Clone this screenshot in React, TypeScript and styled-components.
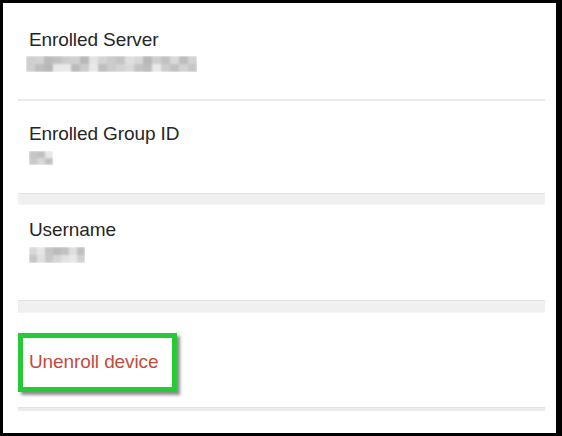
import React from "react";
import styled, { createGlobalStyle } from "styled-components";

const Global = createGlobalStyle`
  html, body { margin: 0; padding: 0; background: #000; }
  body { font-family: "Liberation Sans", Arial, sans-serif; }
`;

const Frame = styled.div`
  width: 562px;
  height: 436px;
  box-sizing: border-box;
  background: #000;
  padding: 3px 6px 3px 3px;
`;

const Screen = styled.div`
  height: 100%;
  background: #fff;
  padding: 0 11px 0 15px;
  box-sizing: border-box;
  display: flex;
  flex-direction: column;
`;

const Section = styled.div<{ $top: number; $bottom: number }>`
  padding: ${(p) => p.$top}px 0 ${(p) => p.$bottom}px 11px;
  display: flex;
  flex-direction: column;
  align-items: flex-start;
`;

const Label = styled.div`
  font-size: 19px;
  line-height: 22px;
  color: #262626;
  letter-spacing: -0.1px;
`;

const ValueWrap = styled.div<{ $gap: number; $shift: number }>`
  margin-top: ${(p) => p.$gap}px;
  margin-left: ${(p) => p.$shift}px;
  display: flex;
`;

const Divider = styled.div`
  height: 2px;
  background: #ebebeb;
`;

const Band = styled.div<{ $h: number }>`
  height: ${(p) => p.$h}px;
  box-sizing: border-box;
  background: #f0f0f0;
  border-top: 1px solid #e3e3e3;
  border-bottom: 1px solid #f5f5f5;
`;

const ActionArea = styled.div`
  padding: 20px 0 15px 0;
  display: flex;
`;

const Highlight = styled.div`
  width: 159px;
  height: 59px;
  box-sizing: border-box;
  border: 5px solid #27c936;
  box-shadow: 3px 3px 3px rgba(0, 0, 0, 0.45);
  padding: 13px 0 0 6px;
  background: #fff;
`;

const DangerText = styled.div`
  font-size: 19px;
  line-height: 22px;
  color: #c44a3c;
  letter-spacing: -0.1px;
`;

const BottomLine = styled.div`
  height: 4px;
  background: #ebebeb;
  border-top: 1px solid #e2e2e2;
  box-sizing: border-box;
`;

function Redacted({ cols, rows, cw, ch, seed }: { cols: number; rows: number; cw: number; ch: number; seed: number }) {
  let s = seed;
  const rand = () => {
    s = (s * 9301 + 49297) % 233280;
    return s / 233280;
  };
  const cells: React.ReactNode[] = [];
  for (let r = 0; r < rows; r++) {
    for (let c = 0; c < cols; c++) {
      const v = Math.round(180 + rand() * 55);
      cells.push(
        <rect key={`${r}-${c}`} x={c * cw} y={r * ch} width={cw} height={ch} fill={`rgb(${v},${v},${v})`} />
      );
    }
  }
  const id = `blur${seed}`;
  return (
    <svg width={cols * cw} height={rows * ch} viewBox={`0 0 ${cols * cw} ${rows * ch}`}>
      <defs>
        <filter id={id} x="-10%" y="-20%" width="120%" height="140%">
          <feGaussianBlur stdDeviation="1" />
        </filter>
      </defs>
      <g filter={`url(#${id})`}>{cells}</g>
    </svg>
  );
}

export default function App() {
  return (
    <>
      <Global />
      <Frame>
        <Screen>
          <Section $top={26} $bottom={27}>
            <Label>Enrolled Server</Label>
            <ValueWrap $gap={5} $shift={-3}>
              <Redacted cols={19} rows={2} cw={9} ch={8} seed={7} />
            </ValueWrap>
          </Section>
          <Divider />
          <Section $top={22} $bottom={28}>
            <Label>Enrolled Group ID</Label>
            <ValueWrap $gap={6} $shift={0}>
              <Redacted cols={3} rows={2} cw={8} ch={7} seed={3} />
            </ValueWrap>
          </Section>
          <Band $h={12} />
          <Section $top={14} $bottom={37}>
            <Label>Username</Label>
            <ValueWrap $gap={6} $shift={0}>
              <Redacted cols={7} rows={2} cw={8} ch={8} seed={11} />
            </ValueWrap>
          </Section>
          <Band $h={13} />
          <ActionArea>
            <Highlight>
              <DangerText>Unenroll device</DangerText>
            </Highlight>
          </ActionArea>
          <BottomLine />
        </Screen>
      </Frame>
    </>
  );
}
